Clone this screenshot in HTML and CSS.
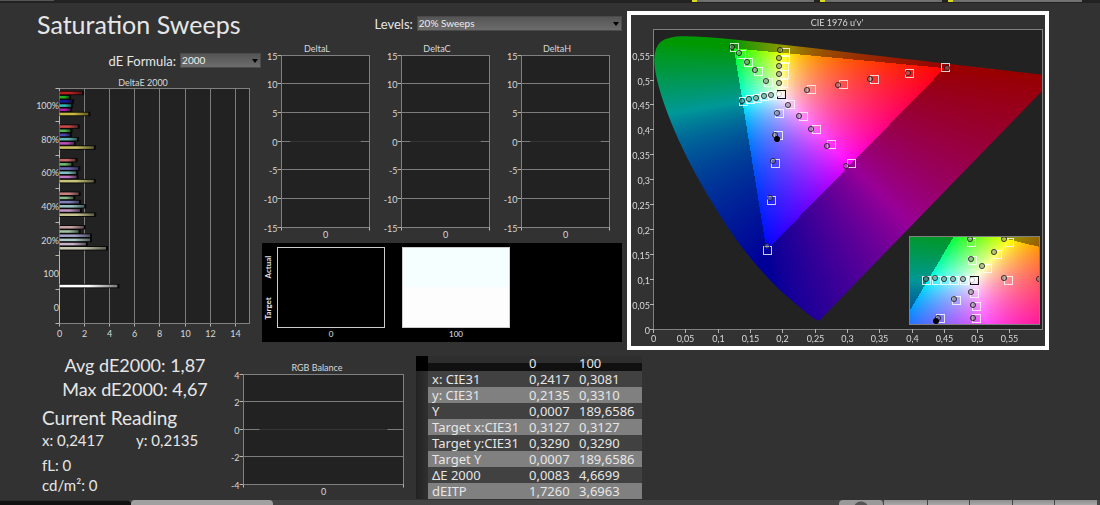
FILE: index.html
```
<!DOCTYPE html>
<html lang="en">
<head>
    <meta charset="UTF-8">
    <meta name="viewport" content="width=device-width, initial-scale=1.0">
    <title>Saturation Sweeps</title>
    <link rel="stylesheet" href="styles.css">
</head>
<body>
    <div class="top-strip">
        <span class="strip-start"></span>
        <span class="strip-tab"></span>
        <span class="strip-tab"></span>
        <span class="strip-tab"></span>
    </div>

    <main>
        <section class="upper">
            <div class="left">
                <h1>Saturation Sweeps</h1>
                <div class="field">
                    <label for="formula">dE Formula:</label>
                    <div class="select formula">
                        <select id="formula">
                            <option>2000</option>
                            <option>1994</option>
                            <option>1976</option>
                        </select>
                    </div>
                </div>
                <svg id="deltaE" class="chart" viewBox="0 0 262 268"></svg>
            </div>

            <div class="middle">
                <div class="field">
                    <label for="levels">Levels:</label>
                    <div class="select levels">
                        <select id="levels">
                            <option>20% Sweeps</option>
                            <option>25% Sweeps</option>
                        </select>
                    </div>
                </div>
                <div class="deltas">
                    <svg id="deltaL" class="chart" viewBox="0 0 120 200"></svg>
                    <svg id="deltaC" class="chart" viewBox="0 0 120 200"></svg>
                    <svg id="deltaH" class="chart" viewBox="0 0 120 200"></svg>
                </div>
                <div class="swatches">
                    <div class="sides">
                        <span>Actual</span>
                        <span>Target</span>
                    </div>
                    <figure>
                        <div class="swatch black"></div>
                        <figcaption>0</figcaption>
                    </figure>
                    <figure>
                        <div class="swatch white"></div>
                        <figcaption>100</figcaption>
                    </figure>
                </div>
            </div>

            <div class="gamut">
                <svg id="cie" class="chart" viewBox="0 0 414 331">
                    <foreignObject x="22" y="14" width="390" height="300">
                        <canvas id="gamutCanvas" width="390" height="300"></canvas>
                    </foreignObject>
                    <g id="cieAxes"></g>
                    <g id="cieMarks" transform="translate(22 14)"></g>
                    <foreignObject x="279" y="222" width="129" height="87">
                        <canvas id="insetCanvas" width="129" height="87"></canvas>
                    </foreignObject>
                    <svg x="279" y="222" width="129" height="87">
                        <g id="insetMarks"></g>
                    </svg>
                    <rect class="frame" x="278.5" y="221.5" width="130" height="88"></rect>
                </svg>
            </div>
        </section>

        <section class="lower">
            <div class="readings">
                <p class="summary">Avg dE2000: 1,87</p>
                <p class="summary">Max dE2000: 4,67</p>
                <h2>Current Reading</h2>
                <div class="xy"><span>x: 0,2417</span><span>y: 0,2135</span></div>
                <p class="luma">fL: 0</p>
                <p>cd/m²: 0</p>
            </div>
            <div class="balance">
                <svg id="rgb" class="chart" viewBox="0 0 180 140"></svg>
            </div>
            <table>
                <thead>
                    <tr><th class="grip"></th><th></th><th>0</th><th>100</th></tr>
                </thead>
                <tbody>
                    <tr><td class="grip"></td><td>x: CIE31</td><td>0,2417</td><td>0,3081</td></tr>
                    <tr><td class="grip"></td><td>y: CIE31</td><td>0,2135</td><td>0,3310</td></tr>
                    <tr><td class="grip"></td><td>Y</td><td>0,0007</td><td>189,6586</td></tr>
                    <tr><td class="grip"></td><td>Target x:CIE31</td><td>0,3127</td><td>0,3127</td></tr>
                    <tr><td class="grip"></td><td>Target y:CIE31</td><td>0,3290</td><td>0,3290</td></tr>
                    <tr><td class="grip"></td><td>Target Y</td><td>0,0007</td><td>189,6586</td></tr>
                    <tr><td class="grip"></td><td>ΔE 2000</td><td>0,0083</td><td>4,6699</td></tr>
                    <tr><td class="grip"></td><td>dEITP</td><td>1,7260</td><td>3,6963</td></tr>
                </tbody>
            </table>
        </section>
    </main>

    <div class="bottom-strip">
        <span class="dark"></span>
        <span class="active"></span>
        <span class="rest"></span>
        <span class="tab knob"></span>
        <span class="tab"></span>
        <span class="tab"></span>
        <span class="tab"></span>
        <span class="tab"></span>
        <span class="tab"></span>
    </div>

    <script src="charts.js"></script>
</body>
</html>
```
FILE: styles.css
```
* {
    box-sizing: border-box;
}
body {
    margin: 0;
    min-height: 100vh;
    display: flex;
    flex-direction: column;
    background: #323232;
    color: #e6e6e6;
    font-family: Lato, "Open Sans", sans-serif;
}
h1, h2, p, figure {
    margin: 0;
    font-weight: normal;
}
main {
    flex: 1;
}

/* strips */
.top-strip {
    display: grid;
    grid-template-columns: 54fr 638fr 122fr 6fr 122fr 6fr 134fr 18fr;
    height: 3px;
    background: #222;
}
.strip-start {
    height: 1px;
    background: #555;
}
.strip-tab {
    height: 2px;
    background: linear-gradient(to right, #d8d820 5px, #707070 5px);
}
.strip-tab:nth-child(2) {
    grid-column: 3;
}
.strip-tab:nth-child(3) {
    grid-column: 5;
}
.strip-tab:nth-child(4) {
    grid-column: 7;
}
.bottom-strip {
    display: grid;
    grid-template-columns: 131fr 142fr 566fr 45fr 44fr 42fr 43fr 42fr 43fr 2fr;
    height: 5px;
    background: #444;
    overflow: hidden;
}
.dark {
    background: #111;
    border-top: 1px solid #2a2a2a;
    border-top-right-radius: 4px;
}
.active {
    background: #a0a0a0;
    border-radius: 4px 4px 0 0;
}
.tab {
    background: linear-gradient(#8e8e8e, #a8a8a8);
    border-right: 1px solid #444;
}
.knob {
    background: radial-gradient(circle at 50% 9px, #555 7px, #999 8px);
    border-radius: 4px 4px 0 0;
}

/* upper half */
.upper {
    display: grid;
    grid-template-columns: 262fr 365fr 422fr 51fr;
    align-items: start;
}
.chart {
    display: block;
    width: 100%;
}
h1 {
    margin: 7px 0 15px 37px;
    font-size: 25px;
    line-height: 28px;
    white-space: nowrap;
}
.field {
    display: flex;
    justify-content: flex-end;
    align-items: center;
    gap: 4px;
    height: 15px;
    font-size: 13px;
}
.left .field {
    margin: 0 1px 7px 0;
}
.middle {
    padding: 13px 5px 0 0;
}
.select {
    position: relative;
    height: 15px;
}
.select::after {
    content: "";
    position: absolute;
    right: 3px;
    top: 6px;
    border: 3px solid transparent;
    border-top: 4px solid #000;
    border-bottom: none;
    pointer-events: none;
}
.formula {
    width: 31%;
}
.levels {
    width: 57%;
}
select {
    appearance: none;
    display: block;
    width: 100%;
    height: 15px;
    padding: 0 1px;
    border: 1px solid #4a4a4a;
    border-radius: 0;
    background: linear-gradient(#555, #6c6c6c);
    color: #eee;
    font: 10px/13px Lato, sans-serif;
}
.deltas {
    display: grid;
    grid-template-columns: repeat(3, 1fr);
    margin: 11px 0 1px;
}
.swatches {
    display: grid;
    grid-template-columns: 15fr 108fr 17fr 108fr 112fr;
    height: 99px;
    padding-top: 4px;
    background: #000;
    font-size: 8px;
    font-weight: bold;
    line-height: 12px;
    text-align: center;
}
.swatches figure:last-child {
    grid-column: 4;
}
.sides {
    display: flex;
    flex-direction: column;
    height: 81px;
}
.sides span {
    flex: 1;
    writing-mode: vertical-rl;
    transform: rotate(180deg);
}
.swatch {
    height: 81px;
    border: 1px solid #ccc;
}
.white {
    background: linear-gradient(#f5ffff 50%, #fdfdfd 50%);
}
.gamut {
    margin-top: 8px;
    border: 4px solid #fff;
}

/* svg parts */
.chart text {
    fill: #d8d8d8;
    font-size: 9px;
}
.plot {
    fill: #222;
}
.frame {
    fill: none;
    stroke: #808080;
}
.grid {
    stroke: #7c7c7c;
    fill: none;
}
.tick {
    stroke: #b4b4b4;
    fill: none;
}
canvas {
    display: block;
}

/* lower half */
.lower {
    display: grid;
    grid-template-columns: 230fr 180fr 6fr 226fr 458fr;
    align-items: start;
}
.readings {
    padding-top: 3px;
    font-size: 15px;
    line-height: 20px;
}
.readings > * {
    margin-left: 42px;
}
.readings .summary {
    margin: 0;
    padding-left: 40px;
    font-size: 18px;
    line-height: 24px;
    text-align: center;
}
.readings h2 {
    margin-top: 5px;
    font-size: 19px;
    line-height: 24px;
}
.xy {
    display: grid;
    grid-template-columns: 1fr 1fr;
}
.readings .luma {
    margin-top: 5px;
}
.balance {
    padding-top: 10px;
}
table {
    grid-column: 4;
    width: 100%;
    height: 143px;
    margin-top: 6px;
    border-collapse: collapse;
    font: 13px/15px "Noto Sans", sans-serif;
    white-space: nowrap;
}
th, td {
    padding: 0;
    text-align: left;
    font-weight: normal;
}
th {
    background: linear-gradient(#2e2e2e 50%, #101010 50%);
}
td:nth-child(2), th:nth-child(2) {
    padding-left: 4px;
    width: 101px;
}
td:nth-child(3), th:nth-child(3) {
    width: 50px;
}
tbody tr {
    background: #414141;
}
tbody tr:nth-child(even) {
    background: #808080;
}
.grip {
    width: 12px;
    background: linear-gradient(to right, #222, #303030);
}
th.grip {
    background: #000;
}
```
FILE: charts.js
```
function el(parent, name, attrs, text) {
    const node = document.createElementNS("http://www.w3.org/2000/svg", name);
    for (const key in attrs) node.setAttribute(key, attrs[key]);
    if (text !== undefined) node.textContent = text;
    parent.appendChild(node);
    return node;
}

function line(parent, cls, x1, y1, x2, y2) {
    el(parent, "path", { class: cls, d: `M${x1} ${y1}L${x2} ${y2}` });
}

function label(parent, x, y, text, anchor) {
    el(parent, "text", { x: x, y: y, "text-anchor": anchor || "middle" }, text);
}

// horizontal bars, one group of seven slots for each level
const slotColors = ["r", "g", "b", "c", "m", "y", "w"];
const sweeps = [
    { name: "100%", colors: ["#b82020", "#20b020", "#1818a0", "#30b8b8", "#b020b0", "#c8b840"], values: [1.87, 0.84, 1.08, 1, 0.93, 2.37] },
    { name: "80%", colors: ["#c84848", "#50b450", "#4848b0", "#60b8b8", "#b850b8", "#c8c060"], values: [1.53, 0.95, 0.9, 1.47, 1.23, 2.8] },
    { name: "60%", colors: ["#c86868", "#70b870", "#6868b8", "#80c0c0", "#c078c0", "#c8c478"], values: [1.35, 1.02, 1.57, 1.4, 1.43, 2.8] },
    { name: "40%", colors: ["#c88080", "#88b888", "#8080c0", "#98c0c0", "#c090c0", "#c8c490"], values: [1.6, 1.18, 1.63, 2.05, 1.7, 2.83] },
    { name: "20%", colors: ["#c8a0a0", "#a0c0a0", "#a0a0c8", "#b0c8c8", "#c8b0c8", "#c8c8b0"], values: [2, 1.6, 2.5, 2.5, 2.17, 3.77] },
    { name: "100", colors: ["", "", "", "", "", "", "#ffffff"], values: [0, 0, 0, 0, 0, 0, 4.67] },
    { name: "0", colors: [], values: [] }
];

function drawDeltaE() {
    const svg = document.getElementById("deltaE");
    const left = 59.5, top = 13.5, width = 190, height = 235, unit = 12.6;
    const row = height / sweeps.length;
    const defs = el(svg, "defs", {});

    label(svg, 143, 11, "DeltaE 2000");
    el(svg, "rect", { class: "plot", x: left, y: top, width: width, height: height });
    for (let v = 0; v <= 14; v += 2) {
        const x = Math.round(left + v * unit) - 0.5;
        line(svg, "grid", x, top, x, top + height);
        line(svg, "tick", x, top + height, x, top + height + 3);
        label(svg, x, 262, v);
    }
    el(svg, "rect", { class: "frame", x: left, y: top, width: width, height: height });
    line(svg, "tick", left, top, left, top + height);

    sweeps.forEach((sweep, i) => {
        const y = top + i * row;
        line(svg, "tick", left - 4, Math.round(y) - 0.5, left, Math.round(y) - 0.5);
        label(svg, 59, y + row / 2 + 4, sweep.name, "end");
        sweep.values.forEach((value, k) => {
            if (!value) return;
            const id = "bar" + i + slotColors[k];
            const grad = el(defs, "linearGradient", { id: id });
            el(grad, "stop", { offset: 0.5, "stop-color": sweep.colors[k] });
            el(grad, "stop", { offset: 1, "stop-color": sweep.colors[k], "stop-opacity": 0.45 });
            const by = y + 4.5 + k * 4.2;
            el(svg, "rect", { x: left, y: by - 2.2, width: value * unit + 1, height: 4.4, fill: "#080808" });
            el(svg, "rect", { x: left, y: by - 1.3, width: value * unit - 1, height: 2.6, fill: `url(#${id})` });
        });
    });
    line(svg, "tick", left - 4, top + height, left, top + height);
}

function drawLevelChart(id, title, box, max, step, textX) {
    const svg = document.getElementById(id);
    const bottom = box.y + box.h, right = box.x + box.w;
    label(svg, textX, box.y - 4, title);
    el(svg, "rect", { class: "plot", x: box.x, y: box.y, width: box.w, height: box.h });
    for (let v = max; v >= -max; v -= step) {
        const y = Math.round(box.y + (max - v) / (2 * max) * box.h) - 0.5;
        line(svg, "grid", box.x, y, right, y);
        line(svg, "tick", box.x - 4, y, box.x, y);
        label(svg, box.x - 4, y + 4, v, "end");
        if (v === 0) el(svg, "rect", { x: box.x + box.w * 0.1, y: y - 0.5, width: box.w * 0.8, height: 1, fill: "#343434" });
    }
    el(svg, "rect", { class: "frame", x: box.x, y: box.y, width: box.w, height: box.h });
    line(svg, "tick", box.x, bottom, box.x, bottom + 3);
    line(svg, "tick", right, bottom, right, bottom + 3);
    label(svg, box.x + box.w / 2, bottom + 10, "0");
}

// CIE 1976 diagram
const white = { u: 0.1978, v: 0.4683 };
const locus = [
    [0.1741, 0.005], [0.1714, 0.0051], [0.1644, 0.0109], [0.1566, 0.0177], [0.144, 0.0297],
    [0.1241, 0.0578], [0.1096, 0.0868], [0.0913, 0.1327], [0.0687, 0.2007], [0.0454, 0.295],
    [0.0235, 0.4127], [0.0082, 0.5384], [0.0039, 0.6548], [0.0139, 0.7502], [0.0389, 0.812],
    [0.0743, 0.8338], [0.1142, 0.8262], [0.1547, 0.8059], [0.2296, 0.7543], [0.3016, 0.6923],
    [0.3731, 0.6245], [0.4441, 0.5547], [0.5125, 0.4866], [0.5752, 0.4242], [0.627, 0.3725],
    [0.6915, 0.3083], [0.7347, 0.2653]
];

function uvToRgb(u, v) {
    const X = 9 * u / (4 * v), Z = (12 - 3 * u - 20 * v) / (4 * v);
    const lin = [
        3.2406 * X - 1.5372 - 0.4986 * Z,
        -0.9689 * X + 1.8758 + 0.0415 * Z,
        0.0557 * X - 0.204 + 1.057 * Z
    ];
    const inside = Math.min(...lin) >= 0;
    const max = Math.max(...lin);
    return lin.map(c => Math.pow(Math.max(c, 0) / max, 0.8) * (inside ? 255 : 152));
}

function paint(id, toUv) {
    const canvas = document.getElementById(id);
    const ctx = canvas.getContext("2d");
    const img = ctx.createImageData(canvas.width, canvas.height);
    for (let y = 0; y < canvas.height; y++) {
        for (let x = 0; x < canvas.width; x++) {
            const [u, v] = toUv(x + 0.5, y + 0.5);
            const rgb = uvToRgb(u, Math.max(v, 0.001));
            img.data.set([rgb[0], rgb[1], rgb[2], 255], (y * canvas.width + x) * 4);
        }
    }
    ctx.putImageData(img, 0, 0);
    return ctx;
}

function drawGamut() {
    const ctx = paint("gamutCanvas", (x, y) => [x / 647, (300 - y) / 499]);
    // keep only what is inside the spectral locus
    ctx.globalCompositeOperation = "destination-in";
    ctx.beginPath();
    const pts = locus.map(([x, y]) => {
        const d = -2 * x + 12 * y + 3;
        return [4 * x / d * 647, 300 - 9 * y / d * 499];
    });
    ctx.moveTo(...pts[0]);
    for (let i = 1; i < pts.length - 1; i++) {
        ctx.quadraticCurveTo(...pts[i], (pts[i][0] + pts[i + 1][0]) / 2, (pts[i][1] + pts[i + 1][1]) / 2);
    }
    ctx.lineTo(...pts[pts.length - 1]);
    ctx.fill();
    ctx.globalCompositeOperation = "destination-over";
    ctx.fillStyle = "#222";
    ctx.fillRect(0, 0, 390, 300);

    // skewed close-up around the white point
    const a = 695, b = 380, c = 100, d = -482, det = a * d - b * c;
    paint("insetCanvas", (x, y) => {
        const dx = x - 64, dy = y - 43;
        return [white.u + (d * dx - b * dy) / det, white.v + (a * dy - c * dx) / det];
    });
}

function drawAxes() {
    const g = document.getElementById("cieAxes");
    label(g, 206, 11, "CIE 1976 u'v'");
    el(g, "rect", { class: "frame", x: 22.5, y: 14.5, width: 389, height: 300 });
    for (let i = 0; i <= 11; i++) {
        const text = String(i * 5 / 100).replace(".", ",");
        const x = Math.round(22 + i * 32.35) + 0.5, y = Math.round(314 - i * 24.95) + 0.5;
        line(g, "tick", x, 314, x, 318);
        line(g, "tick", 19, y, 23, y);
        label(g, x, 327, text);
        label(g, 19, y + 4, text, "end");
    }
}

const targets = [
    [81, 18], [88, 25], [95, 33], [105, 42], [115, 53],
    [132, 23], [132, 30], [131, 37], [131, 45], [130, 54],
    [158, 60], [190, 55], [221, 50], [256, 44], [292, 38],
    [90, 72], [97, 70], [104, 69], [111, 67], [119, 66],
    [137, 75], [150, 87], [163, 100], [178, 115], [198, 134],
    [126, 84], [125, 106], [122, 134], [118, 171], [114, 221]
];
const measured = [
    [79, 18], [86, 24], [94, 33], [102, 41], [113, 52],
    [127, 21], [126, 29], [126, 37], [126, 45], [126, 54],
    [154, 61], [185, 56], [217, 50], [255, 44], [294, 39],
    [89, 72], [96, 70], [103, 69], [111, 67], [118, 66],
    [135, 76], [146, 87], [158, 100], [174, 117], [193, 137],
    [124, 84], [122, 106], [120, 132], [117, 169], [114, 217]
];
const insetTargets = [
    [16, 43], [26, 43], [35, 43], [44, 43], [54, 43], [61, 5], [62, 23], [77, 31], [87, 17], [99, 5],
    [98, 43], [64, 56], [66, 69], [66, 81], [46, 63], [30, 81]
];
const insetMeasured = [
    [16, 42], [25, 41], [34, 42], [43, 42], [53, 42], [60, 2], [61, 22], [94, 2], [84, 15], [72, 29],
    [94, 41], [129, 42], [61, 55], [63, 68], [63, 81], [44, 62], [28, 81]
];

function square(g, x, y, color) {
    el(g, "rect", { x: x - 4, y: y - 4, width: 8, height: 8, fill: "none", stroke: color });
}

function circle(g, x, y, fill, stroke) {
    el(g, "circle", { cx: x, cy: y, r: 2.6, fill: fill, stroke: stroke });
}

function drawMarks(id, squares, circles, whiteAt, blackAt) {
    const g = document.getElementById(id);
    squares.forEach(([x, y]) => square(g, x + 0.5, y + 0.5, "rgba(255,255,255,0.8)"));
    circles.forEach(([x, y]) => circle(g, x, y, "rgba(128,128,128,0.5)", "rgba(20,20,20,0.75)"));
    square(g, whiteAt[0] + 0.5, whiteAt[1] + 0.5, "#111");
    circle(g, whiteAt[0] - 2, whiteAt[1], "#fff", "#ccc");
    circle(g, blackAt[0], blackAt[1], "#000", "#000");
}

drawDeltaE();
drawLevelChart("deltaL", "DeltaL", { x: 19.5, y: 13.5, w: 88, h: 172 }, 15, 5, 55);
drawLevelChart("deltaC", "DeltaC", { x: 19.5, y: 13.5, w: 88, h: 172 }, 15, 5, 55);
drawLevelChart("deltaH", "DeltaH", { x: 19.5, y: 13.5, w: 88, h: 172 }, 15, 5, 55);
drawLevelChart("rgb", "RGB Balance", { x: 13.5, y: 14.5, w: 160, h: 110 }, 4, 2, 87);
drawGamut();
drawAxes();
drawMarks("cieMarks", targets, measured, [128, 65], [124, 110]);
drawMarks("insetMarks", insetTargets, insetMeasured, [64, 43], [26, 84]);
```
